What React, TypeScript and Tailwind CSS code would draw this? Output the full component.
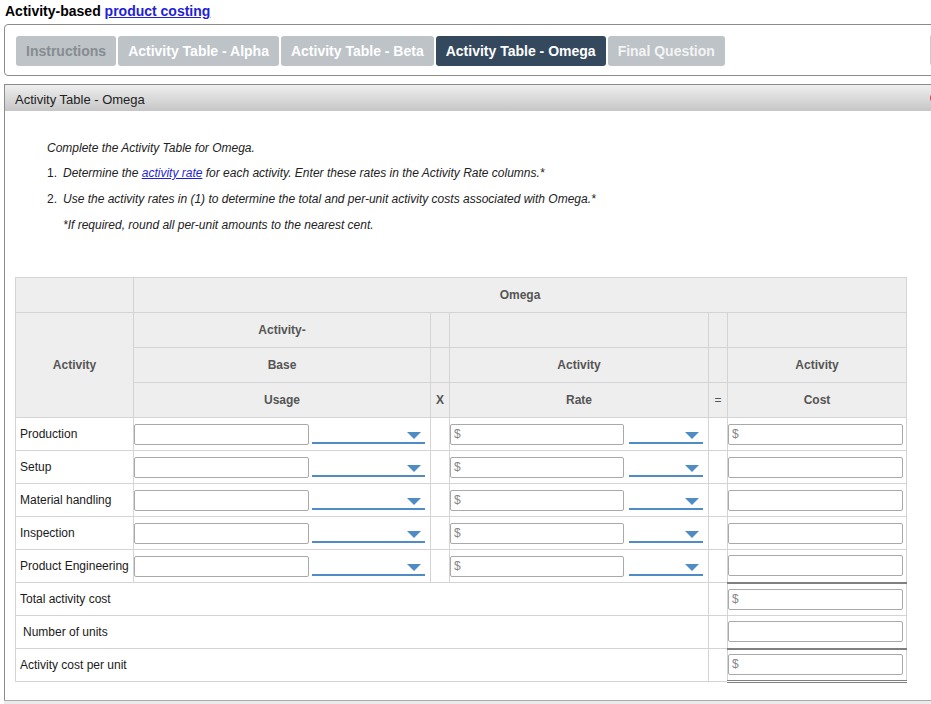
const rows = [
  { label: 'Production', costDollar: true },
  { label: 'Setup', costDollar: false },
  { label: 'Material handling', costDollar: false },
  { label: 'Inspection', costDollar: false },
  { label: 'Product Engineering', costDollar: false },
];

const tabs = [
  { label: 'Instructions', cls: 'bg-[#bdc3c7] text-[#878c90]' },
  { label: 'Activity Table - Alpha', cls: 'bg-[#bdc3c7] text-white' },
  { label: 'Activity Table - Beta', cls: 'bg-[#bdc3c7] text-white' },
  { label: 'Activity Table - Omega', cls: 'bg-[#34495e] text-white' },
  { label: 'Final Question', cls: 'bg-[#bdc3c7] text-[#f4f4f4]' },
];

function Arrow() {
  return (
    <svg width="14" height="7" viewBox="0 0 14 7" className="absolute right-[4px] top-[8px]">
      <polygon points="0,0 14,0 7,7" fill="#4f8cc6" />
    </svg>
  );
}

function Field({ className, dollar }: { className: string; dollar?: boolean }) {
  return (
    <div className={`h-[21px] border border-[#a9a9a9] rounded-[2px] bg-white pl-[3px] text-[12px] leading-[19px] text-[#888] ${className}`}>
      {dollar ? '$' : ''}
    </div>
  );
}

function Select({ className }: { className: string }) {
  return (
    <div className={`relative h-[20px] border-b-2 border-[#4f8cc6] ${className}`}>
      <Arrow />
    </div>
  );
}

const th = 'bg-[#eeeeee] border border-[#d4d4d4] text-center font-bold text-[12px] text-[#555] h-[35px] p-0';
const td = 'border border-[#d4d4d4] bg-white h-[33px] p-0 align-middle';

export default function App() {
  return (
    <div className="w-[931px] h-[704px] overflow-hidden bg-white font-['Liberation_Sans',Arial,sans-serif] text-[#1a1a1a]">
      <div className="w-[970px] pl-[4px]">
        {/* Title */}
        <div className="mt-[1px] pl-[1px] h-[20px] leading-[20px] text-[14px] font-bold text-black">
          Activity-based <a className="text-[#1f1fd6] underline">product costing</a>
        </div>

        {/* Tab bar */}
        <div className="mt-[3px] border border-[#8c8c8c] rounded-[4px] pt-[11px] pb-[8px] pl-[11px] pr-[9px] flex gap-[2px]">
          {tabs.map((t) => (
            <div key={t.label} className={`h-[30px] px-[10px] leading-[30px] rounded-[3px] font-bold text-[14px] ${t.cls}`}>
              {t.label}
            </div>
          ))}
          <div className="ml-auto -mt-[3px] w-[30px] h-[34px] border border-[#cccccc] rounded-[4px]" />
        </div>

        {/* Panel */}
        <div className="mt-[8px] border border-[#8c8c8c] border-r-0">
          <div className="h-[26px] bg-linear-to-b from-[#efefef] to-[#c6c6c6] flex items-center pl-[10px] pr-[28px] pt-[3px]">
            <span className="text-[13px] text-[#222]">Activity Table - Omega</span>
            <span className="ml-auto -mt-[3px] w-[12px] h-[12px] rounded-full bg-[#e03b3b]" />
          </div>

          <div className="pl-[42px] pt-[24px] text-[12px] leading-[26px] text-[#222]">
            <div className="italic">Complete the Activity Table for Omega.</div>
            <div className="flex -mt-px">
              <span className="w-[16px]">1.</span>
              <span className="italic">
                Determine the <a className="text-[#1f1fd6] underline">activity rate</a> for each activity. Enter these rates in the Activity Rate columns.*
              </span>
            </div>
            <div className="flex">
              <span className="w-[16px]">2.</span>
              <span className="italic">
                Use the activity rates in (1) to determine the total and per-unit activity costs associated with Omega.*
              </span>
            </div>
            <div className="pl-[16px] italic">*If required, round all per-unit amounts to the nearest cent.</div>
          </div>

          <div className="pl-[10px] pt-[39px] pb-[17px]">
            <table className="table-fixed border-collapse w-[891px] text-[12px]">
              <colgroup>
                <col className="w-[118px]" />
                <col className="w-[297px]" />
                <col className="w-[19px]" />
                <col className="w-[259px]" />
                <col className="w-[19px]" />
                <col className="w-[179px]" />
              </colgroup>
              <tbody>
                <tr>
                  <td className={th} />
                  <td className={th} colSpan={5}>Omega</td>
                </tr>
                <tr>
                  <td className={th} rowSpan={3}>Activity</td>
                  <td className={th}>Activity-</td>
                  <td className={th} />
                  <td className={th} />
                  <td className={th} />
                  <td className={th} />
                </tr>
                <tr>
                  <td className={th}>Base</td>
                  <td className={th} />
                  <td className={th}>Activity</td>
                  <td className={th} />
                  <td className={th}>Activity</td>
                </tr>
                <tr>
                  <td className={th}>Usage</td>
                  <td className={th}>X</td>
                  <td className={th}>Rate</td>
                  <td className={`${th} font-normal`}>=</td>
                  <td className={th}>Cost</td>
                </tr>

                {rows.map((r) => (
                  <tr key={r.label}>
                    <td className={`${td} pl-[4px] whitespace-nowrap`}>{r.label}</td>
                    <td className={td}>
                      <div className="flex items-start">
                        <Field className="w-[175px]" />
                        <Select className="ml-[3px] w-[113px]" />
                      </div>
                    </td>
                    <td className={td} />
                    <td className={td}>
                      <div className="flex items-start">
                        <Field className="w-[174px]" dollar />
                        <Select className="ml-[5px] w-[74px]" />
                      </div>
                    </td>
                    <td className={td} />
                    <td className={td}>
                      <Field className="w-[175px]" dollar={r.costDollar} />
                    </td>
                  </tr>
                ))}

                <tr>
                  <td className={`${td} pl-[4px]`} colSpan={4}>Total activity cost</td>
                  <td className={td} />
                  <td className={`${td} border-t-2 border-t-[#808080]`}>
                    <Field className="w-[175px]" dollar />
                  </td>
                </tr>
                <tr>
                  <td className={`${td} pl-[7px]`} colSpan={4}>Number of units</td>
                  <td className={td} />
                  <td className={td}>
                    <Field className="w-[175px]" />
                  </td>
                </tr>
                <tr>
                  <td className={`${td} pl-[4px]`} colSpan={4}>Activity cost per unit</td>
                  <td className={td} />
                  <td className={`${td} border-t-2 border-t-[#808080] border-b-[3px] border-b-[#808080] border-double`}>
                    <Field className="w-[175px]" dollar />
                  </td>
                </tr>
              </tbody>
            </table>
          </div>
        </div>
        <div className="h-[20px] bg-[#ebebeb] border-t border-[#aaaaaa] -mt-px" />
      </div>
    </div>
  );
}
